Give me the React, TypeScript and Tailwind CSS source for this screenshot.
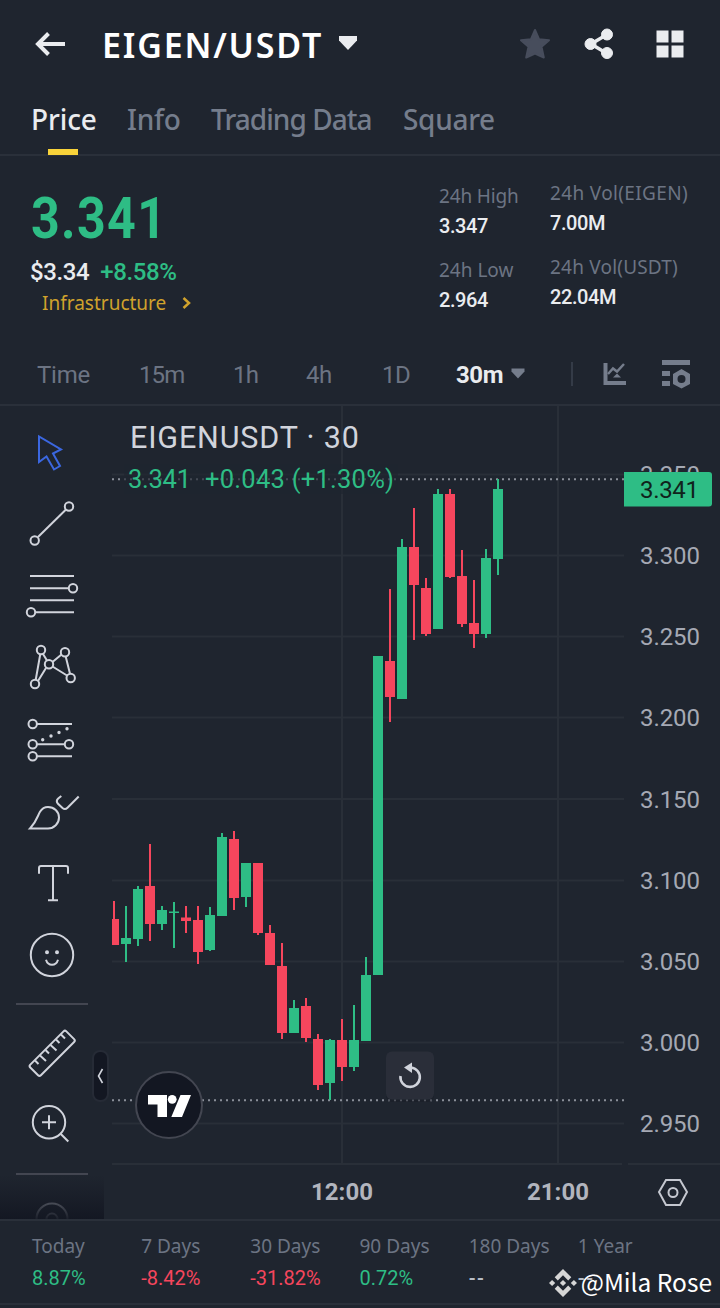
import type { ReactNode } from "react";

type Direction = "up" | "down";

interface Candle {
  x: number;
  dir: Direction;
  high: number;
  top: number;
  bottom: number;
  low: number;
}

const UP = "#2ebd85";
const DOWN = "#f6465d";

// [x, direction, high, body top, body bottom, low] in plot units
const rawCandles: [number, Direction, number, number, number, number][] = [
  [114, "down", 901, 919, 945, 945],
  [126, "up", 906, 938, 944, 962],
  [138, "up", 886, 889, 939, 946],
  [150, "down", 844, 886, 924, 941],
  [162, "up", 906, 910, 924, 930],
  [174, "up", 902, 911.5, 913, 948],
  [186, "down", 906, 917.5, 921, 933],
  [198, "down", 906, 920, 952, 964],
  [210, "up", 907, 915, 950, 951],
  [222, "up", 833, 837, 916, 916],
  [234, "down", 831, 839, 898, 910],
  [246, "up", 863, 863, 897, 907],
  [258, "down", 863, 863, 933, 935],
  [270, "down", 925, 933, 965, 965],
  [282, "down", 943, 966, 1033, 1039],
  [294, "up", 1000, 1008, 1033, 1033],
  [306, "down", 998, 1006, 1038, 1042],
  [318, "down", 1034, 1039, 1085, 1090],
  [330, "up", 1039, 1040, 1083, 1100],
  [342, "down", 1019, 1040, 1067, 1081],
  [354, "up", 1005, 1040, 1067, 1071],
  [366, "up", 957, 975, 1041, 1041],
  [378, "up", 656, 656, 975, 975],
  [390, "down", 589, 661, 697, 722],
  [402, "up", 539, 547, 699, 699],
  [414, "down", 508, 547, 585, 640],
  [426, "down", 578, 588, 634, 636],
  [438, "up", 489, 494, 629, 629],
  [450, "down", 489, 494, 577, 578],
  [462, "down", 550, 576, 624, 627],
  [474, "down", 580, 623, 634, 648],
  [486, "up", 549, 558, 634, 638],
  [498, "up", 479, 489, 559, 575],
];

const candles: Candle[] = rawCandles.map(([x, dir, high, top, bottom, low]) => ({ x, dir, high, top, bottom, low }));

const priceLevels = [
  { label: "3.350", y: 474.5 },
  { label: "3.300", y: 555.5 },
  { label: "3.250", y: 636.5 },
  { label: "3.200", y: 717.5 },
  { label: "3.150", y: 799 },
  { label: "3.100", y: 880.5 },
  { label: "3.050", y: 961.5 },
  { label: "3.000", y: 1042.5 },
  { label: "2.950", y: 1123.5 },
];

const tabs = [
  { label: "Price", width: "w-[96px] tracking-[-0.1px]", active: true },
  { label: "Info", width: "w-[84px] tracking-[-0.2px]", active: false },
  { label: "Trading Data", width: "w-[192px] tracking-[-0.95px]", active: false },
  { label: "Square", width: "w-[100px] tracking-[-0.3px]", active: false },
];

const intervals = [
  { label: "Time", width: "w-[102px] tracking-[-0.2px]" },
  { label: "15m", width: "w-[94px] tracking-[-0.9px]" },
  { label: "1h", width: "w-[73px] tracking-[-0.8px]" },
  { label: "4h", width: "w-[76px] tracking-[-0.5px]" },
  { label: "1D", width: "w-[74px] tracking-[-0.5px]" },
];

const performance = [
  { label: "Today", value: "8.87%", color: "text-[#2ebd85]" },
  { label: "7 Days", value: "-8.42%", color: "text-[#f6465d]" },
  { label: "30 Days", value: "-31.82%", color: "text-[#f6465d]" },
  { label: "90 Days", value: "0.72%", color: "text-[#2ebd85]" },
  { label: "180 Days", value: "--", color: "text-[#b7bdc6] font-medium tracking-[1.5px]" },
  { label: "1 Year", value: "--", color: "text-[#b7bdc6] font-medium tracking-[1.5px]" },
];

function Header() {
  return (
    <header className="flex h-[88px] items-center pl-[34px] pr-[36px]">
      <svg className="-mt-px" width="32" height="26" viewBox="0 0 32 26" fill="none" stroke="#eaecef" strokeWidth="4">
        <path d="M31 13H4M14.5 2.500L4 13L14.500 23.500" />
      </svg>
      <h1 className="ml-[36px] mt-[2px] w-[223px] whitespace-nowrap font-['Noto_Sans'] text-[34px] font-semibold leading-none tracking-[1.8px] text-white">
        EIGEN/USDT
      </h1>
      <svg className="-mt-[2px] ml-[13px]" width="20" height="16" viewBox="0 0 20 16" fill="#eaecef">
        <path d="M1 1H19V5.500L10 15L1 5.500Z" />
      </svg>
      <div className="-mt-px ml-auto flex items-center">
        <svg width="32" height="32" viewBox="0 0 32 32" fill="#474d5c" stroke="#474d5c" strokeWidth="2" strokeLinejoin="round">
          <path d="M16 2L20 11.200L30 12.200L22.500 18.800L24.800 29.500L16 25.500L7.200 29.500L9.500 18.800L2 12.200L12 11.200Z" />
        </svg>
        <svg className="ml-[33px]" width="30" height="32" viewBox="0 0 30 32" fill="#eaecef" stroke="#eaecef">
          <path d="M23 6.500L7 16L23 25.500" fill="none" strokeWidth="3.500" />
          <circle cx="23" cy="6.500" r="5.500" />
          <circle cx="6.500" cy="16" r="5.500" />
          <circle cx="23" cy="25" r="5.500" />
        </svg>
        <svg className="ml-[42px]" width="28" height="28" viewBox="0 0 28 28" fill="#eaecef">
          <path d="M0.500 0.500H12.500V12.500H0.500ZM15.500 0.500H27.500V12.500H15.500ZM0.500 15.500H12.500V27.500H0.500ZM15.500 15.500H27.500V27.500H15.500Z" />
        </svg>
      </div>
    </header>
  );
}

function Tabs() {
  return (
    <nav className="flex h-[68px] border-b-2 border-[#2a303a] pl-[31px] font-['Noto_Sans'] text-[28px] font-medium leading-[62px]">
      {tabs.map((tab) => (
        <div key={tab.label} className={`${tab.width} flex flex-col whitespace-nowrap ${tab.active ? "text-[#eaecef]" : "text-[#757d8c]"}`}>
          <span className="h-[61px]">{tab.label}</span>
          {tab.active && <span className="ml-[17px] h-[6px] w-[30px] shrink-0 bg-[#f8d33a]" />}
        </div>
      ))}
    </nav>
  );
}

function Stat({ label, value, labelClass }: { label: string; value: string; labelClass: string }) {
  return (
    <div className="h-[74px] whitespace-nowrap">
      <div className={`font-['Noto_Sans'] text-[19px] leading-[29px] text-[#6c7483] ${labelClass}`}>{label}</div>
      <div className="font-['Roboto'] text-[20px] font-medium leading-[30px] tracking-[-0.4px] text-[#eaecef]">{value}</div>
    </div>
  );
}

function PriceSummary() {
  return (
    <section className="flex h-[190px] pl-[31px]">
      <div className="w-[408px] font-['Roboto']">
        <div className="mt-[34px] h-[56px] origin-left scale-x-[0.88] text-[57px] font-bold leading-[58px] tracking-[1.5px] text-[#2ebd85]">3.341</div>
        <div className="-ml-px mt-[12px] flex h-[28px] gap-[11px] text-[24px] font-medium leading-[28px] tracking-[-0.4px]">
          <span className="text-[#eaecef]">$3.34</span>
          <span className="text-[#2ebd85]">+8.58%</span>
        </div>
        <div className="ml-[11px] mt-[2px] flex items-center gap-[16px] font-['Noto_Sans'] text-[19px] leading-[30px] text-[#d0a22c]">
          Infrastructure
          <svg width="9" height="14" viewBox="0 0 9 14" fill="none" stroke="currentColor" strokeWidth="2.500">
            <path d="M1.500 2L7 7L1.500 12" />
          </svg>
        </div>
      </div>
      <div className="w-[111px] pt-[26px]">
        <Stat label="24h High" value="3.347" labelClass="tracking-[-0.15px]" />
        <Stat label="24h Low" value="2.964" labelClass="" />
      </div>
      <div className="pt-[23px]">
        <Stat label="24h Vol(EIGEN)" value="7.00M" labelClass="tracking-[0.35px]" />
        <Stat label="24h Vol(USDT)" value="22.04M" labelClass="tracking-[0.2px]" />
      </div>
    </section>
  );
}

function IntervalBar() {
  return (
    <section className="flex h-[60px] items-center border-b-2 border-[#2a303a] pl-[37px] font-['Roboto'] text-[24px] text-[#6c7483]">
      {intervals.map((item) => (
        <span key={item.label} className={item.width}>{item.label}</span>
      ))}
      <span className="w-[55px] font-bold tracking-[-0.4px] text-[#eaecef]">30m</span>
      <svg className="-mt-[4px]" width="14" height="11" viewBox="0 0 14 11" fill="#757d8c">
        <path d="M0.500 0.500H13.500V3.500L7 10.500L0.500 3.500Z" />
      </svg>
      <span className="-mt-[2px] ml-[46px] h-[24px] w-[2px] bg-[#343b47]" />
      <svg className="-mt-[2px] ml-[30px]" width="24" height="24" viewBox="0 0 24 24" fill="none" stroke="#757d8c">
        <path d="M2.500 1V21H23" strokeWidth="4" />
        <path d="M5 12L10 6.500L14 9.500L21 2" strokeWidth="2.500" />
        <path d="M14 11.500L18 15.500H10Z" fill="#757d8c" stroke="none" />
      </svg>
      <svg className="-mt-[2px] ml-[34px]" width="30" height="30" viewBox="0 0 30 30" fill="#757d8c">
        <path d="M1 1H29V6H1ZM1 12H9V17H1ZM1 22H9V27H1Z" />
        <path fillRule="evenodd" d="M20.500 10L29 15V25L20.500 29.500L12 25V15ZM20.500 16A4 4 0 1 0 20.500 24A4 4 0 1 0 20.500 16Z" />
      </svg>
    </section>
  );
}

function Tool({ children, color = "#d1d4dc" }: { children: ReactNode; color?: string }) {
  return (
    <svg className="h-[72px] w-[104px] shrink-0" viewBox="0 0 104 72" fill="none" stroke={color} strokeWidth="2">
      {children}
    </svg>
  );
}

function Toolbar() {
  return (
    <aside className="relative flex h-[813px] w-[104px] shrink-0 flex-col overflow-hidden pt-[9px]">
      {/* Cursor */}
      <Tool color="#3b67e0">
        <path d="M39 21.500V47L46.500 41.500L54 54.500L60 51L53 38.500L61 34.500Z" />
      </Tool>
      {/* Trend line */}
      <Tool>
        <path d="M38 50L66 22.500" />
        <circle cx="69" cy="19.500" r="4.200" />
        <circle cx="34.700" cy="53.500" r="4.200" />
      </Tool>
      {/* Fib retracement */}
      <Tool>
        <path d="M30 17H74M30 29.300H68.500M30 41.300H74M35.500 53.300H74" />
        <circle cx="73" cy="29.300" r="4.200" />
        <circle cx="31" cy="53.300" r="4.200" />
      </Tool>
      {/* XABCD pattern */}
      <Tool>
        <path d="M40.300 23L35.700 49M43 23L47 29.500M52.500 31L61.500 23.500M65.700 25.500L70 42.800M52.500 35.500L67 44.500M38 50L46 37" />
        <circle cx="41" cy="19" r="4.200" />
        <circle cx="65" cy="21.300" r="4.200" />
        <circle cx="49" cy="33.300" r="4.200" />
        <circle cx="35" cy="53" r="4.200" />
        <circle cx="70.700" cy="47" r="4.200" />
      </Tool>
      {/* Forecast */}
      <Tool>
        <path d="M37 21H72M37 41.200H65M37 53.200H72" />
        <circle cx="32.700" cy="21" r="4.200" />
        <circle cx="32.700" cy="41.200" r="4.200" />
        <circle cx="69" cy="41.200" r="4.200" />
        <circle cx="32.700" cy="53.200" r="4.200" />
        <path d="M42.700 36.700h.01M51 33h.01M59 29.500h.01M67 25.700h.01" strokeWidth="3.400" strokeLinecap="round" />
      </Tool>
      {/* Brush */}
      <Tool>
        <path d="M30 53.500C37 46 37.500 41 40 36.700C42 33.500 45 32 48 32C54 32 59 36.500 59 42.500C59 48.500 54 53.500 48 53.500Z" />
        <path d="M61.300 21L58.200 23.500C56.500 25 56.500 27 58 28.800L62.500 33C64 34.300 66 34.200 67.500 32.700L78.700 21.500" />
      </Tool>
      {/* Text */}
      <Tool>
        <path d="M39 26.700V21Q39 19 41 19H66Q68 19 68 21V26.700M53 19V53.300M48 53.300H58" />
      </Tool>
      {/* Emoji */}
      <Tool>
        <circle cx="52" cy="36" r="21.200" />
        <path d="M46 40.700Q47.500 45.800 52 45.800T58 40.700" />
        <path d="M47 33.300h.01M57 33.300h.01" strokeWidth="4" strokeLinecap="round" />
      </Tool>
      <div className="mx-[16px] my-[12px] h-[2px] shrink-0 bg-[#434651]" />
      {/* Ruler */}
      <Tool>
        <rect x="-25.500" y="-7.500" width="51" height="15" rx="2" transform="translate(52.200 36.300) rotate(-45)" />
        <path d="M35 43.500L38.500 47M40 38.500L46 44M45.500 33L49 36.500M50.500 28L56.500 33.500M56 22.500L59.500 26M61 17.500L65 21.500" />
      </Tool>
      {/* Zoom in */}
      <Tool>
        <circle cx="49" cy="33.300" r="16.200" />
        <path d="M42 33.300H56M49 26.300V40.300M60.800 45L68.300 52.500" />
      </Tool>
      <div className="mx-[16px] my-[12px] h-[2px] shrink-0 bg-[#434651]" />
      <Tool>
        <circle cx="52" cy="32" r="15.500" />
        <circle cx="52" cy="32" r="5.500" />
      </Tool>
      <div className="absolute bottom-0 left-0 h-[44px] w-[104px] bg-linear-to-b from-[#131722]/0 to-[#131722]/95 via-[#171b26]/65" />
    </aside>
  );
}

function CandleShape({ candle }: { candle: Candle }) {
  const color = candle.dir === "up" ? UP : DOWN;
  return (
    <g fill={color}>
      <rect x={candle.x - 1} y={candle.high} width="2" height={candle.low - candle.high} />
      <rect x={candle.x - 5} y={candle.top} width="10" height={candle.bottom - candle.top} />
    </g>
  );
}

function Chart() {
  return (
    <svg className="font-['Roboto']" width="616" height="813" viewBox="104 406 616 813">
      <clipPath id="plot">
        <rect x="112" y="406" width="512" height="758" />
      </clipPath>
      <g stroke="#292f38" strokeWidth="2">
        {priceLevels.map((level) => (
          <line key={level.label} x1="112" x2="624" y1={level.y} y2={level.y} />
        ))}
        <path d="M342 406V1164M558 406V1164M112 1164H622M628 1164H720" />
      </g>
      <path d="M112 479.300H624M112 1100.300H624" stroke="#8a8f99" strokeWidth="2" strokeDasharray="2 4" />
      <g clipPath="url(#plot)">
        {candles.map((candle) => (
          <CandleShape key={candle.x} candle={candle} />
        ))}
      </g>

      {/* Legend, over a translucent plate that dims the dotted line */}
      <rect x="124" y="464" width="274" height="30" fill="#1f252f" opacity="0.65" />
      <text x="130" y="448" fontSize="30.500" fill="#d1d4dc" textLength="229">EIGENUSDT · 30</text>
      <g fontSize="25.500" fill="#2ebd85">
        <text x="128" y="488" textLength="63">3.341</text>
        <text x="205" y="488" textLength="189">+0.043 (+1.30%)</text>
      </g>

      <g fontSize="24" fill="#a5a9b4">
        {priceLevels.map((level) => (
          <text key={level.label} x="640" y={level.y + 8.500} textLength="60">{level.label}</text>
        ))}
      </g>
      <path d="M624 472H709Q712 472 712 475V503.500Q712 506.500 709 506.500H624Z" fill="#2ebd85" />
      <text x="640" y="498" fontSize="24" fill="#10231c" textLength="59">3.341</text>

      <g fontSize="24" fontWeight="700" fill="#b2b5be" textAnchor="middle">
        <text x="342" y="1200">12:00</text>
        <text x="558" y="1200">21:00</text>
      </g>
      <g fill="none" stroke="#c5c8d0" strokeWidth="2">
        <path d="M666 1180H680L687 1192L680 1205H666L659 1192Z" />
        <circle cx="673" cy="1192.500" r="4.500" />
      </g>

      {/* TradingView badge */}
      <circle cx="169" cy="1105" r="33" fill="#131722" stroke="#434651" strokeWidth="2" />
      <g fill="#fff">
        <path d="M148 1095H167V1117H157.500V1104.500H148ZM180.500 1095H191L182 1117H171.300Z" />
        <circle cx="172.200" cy="1099.300" r="4.400" />
      </g>

      {/* Reset view */}
      <rect x="386" y="1054" width="48" height="48" rx="6" fill="#171b25" opacity="0.5" />
      <rect x="386" y="1051.500" width="48" height="48" rx="6" fill="#2a2e39" />
      <path d="M400.500 1076A9.700 9.700 0 1 0 411 1067.500" fill="none" stroke="#d1d4dc" strokeWidth="2.600" />
      <path d="M412 1062.500V1073L404 1067.500Z" fill="#d1d4dc" />
    </svg>
  );
}

function CollapseHandle() {
  return (
    <div className="absolute left-[92px] top-[644px] flex h-[52px] w-[17px] items-center justify-center rounded-[8px] border-2 border-[#262b36] bg-[#131722]">
      <svg width="7" height="16" viewBox="0 0 7 16" fill="none" stroke="#d1d4dc" strokeWidth="1.600">
        <path d="M5.500 1L1.500 8L5.500 15" />
      </svg>
    </div>
  );
}

function PerformanceBar() {
  return (
    <footer className="relative grid h-[86px] grid-cols-6 border-y-2 border-[#2a303a] pl-[32px] pr-[33px] pt-[11px]">
      {performance.map((item) => (
        <div key={item.label} className="whitespace-nowrap">
          <div className="font-['Noto_Sans'] text-[19px] leading-[28px] text-[#6c7483]">{item.label}</div>
          <div className={`font-['Roboto'] text-[20px] leading-[37px] ${item.color}`}>{item.value}</div>
        </div>
      ))}
      <div className="absolute right-[8px] top-[46px] flex h-[32px] items-center gap-[4px]">
        <svg width="28" height="28" viewBox="0 0 28 28" fill="#d6d6d6">
          <path d="M14 0L22.300 8.300L19.200 11.400L14 6.200L8.800 11.400L5.700 8.300ZM14 28L22.300 19.700L19.200 16.600L14 21.800L8.800 16.600L5.700 19.700ZM14 10.900L17.100 14L14 17.100L10.900 14ZM3.100 10.900L6.200 14L3.100 17.100L0 14ZM24.900 10.900L28 14L24.900 17.100L21.800 14Z" />
        </svg>
        <span className="-mt-[2px] whitespace-nowrap font-['Noto_Sans_CJK_SC',sans-serif] text-[24.500px] leading-none text-white">@Mila Rose</span>
      </div>
    </footer>
  );
}

export default function App() {
  return (
    <div className="h-[1308px] w-[720px] overflow-hidden bg-[#1f252f]">
      <Header />
      <Tabs />
      <PriceSummary />
      <IntervalBar />
      <main className="relative flex h-[813px]">
        <Toolbar />
        <Chart />
        <CollapseHandle />
      </main>
      <PerformanceBar />
    </div>
  );
}
